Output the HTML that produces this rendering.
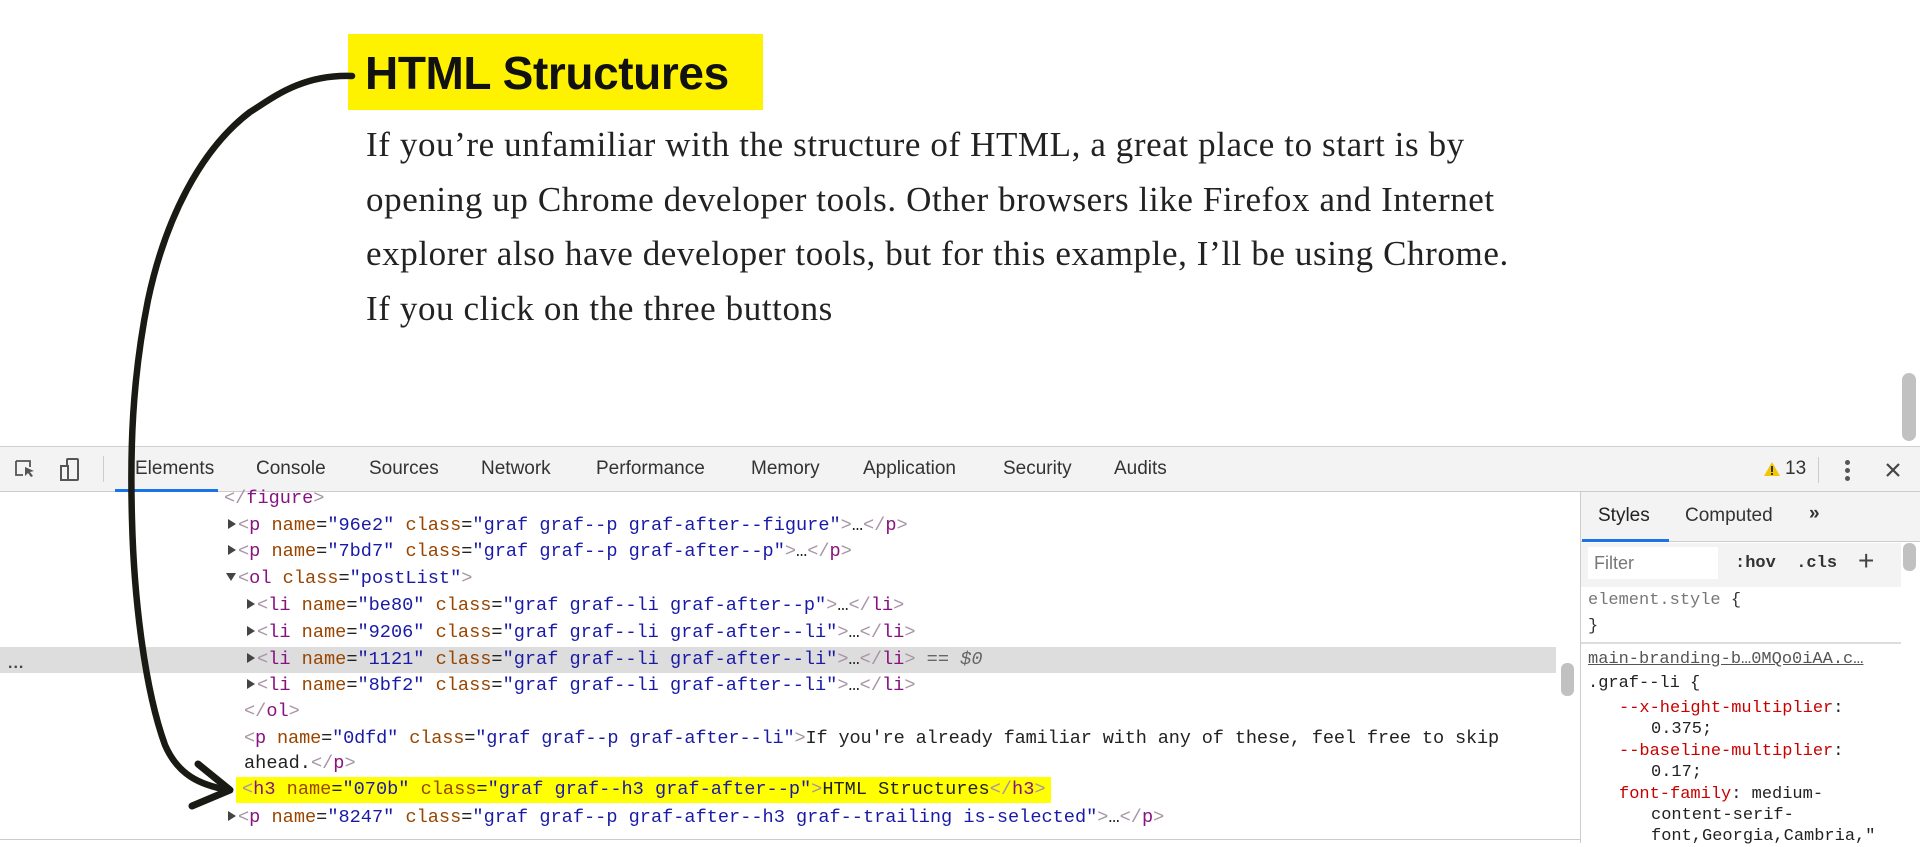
<!DOCTYPE html>
<html><head><meta charset="utf-8"><style>
*{margin:0;padding:0;box-sizing:border-box}
body{width:1920px;height:842px;overflow:hidden;background:#fff;position:relative;font-family:"Liberation Sans",sans-serif}
.abs{position:absolute}
.h{left:348px;top:34px;width:415px;height:76px;background:#fff200}
.h span{position:absolute;left:17px;top:12px;font-weight:bold;font-size:46px;color:#111;letter-spacing:-0.4px}
.p{left:366px;top:118px;font-family:"Liberation Serif",serif;font-size:35px;letter-spacing:0.6px;line-height:54.5px;color:#222;width:1300px;white-space:nowrap}
.pscroll{left:1902px;top:373px;width:14px;height:68px;background:#c1c1c1;border-radius:7px}
.dt{left:0;top:446px;width:1920px;height:396px;border-top:1px solid #cfcfcf}
.tb{left:0;top:0;width:1920px;height:45px;background:#f3f3f3;border-bottom:1px solid #ccc}
.tab{position:absolute;top:11px;font-size:19px;color:#333}
.code{font-family:"Liberation Mono",monospace;font-size:18.6px;color:#222;white-space:pre;position:absolute;line-height:26px}
.tg{color:#881280}.an{color:#994500}.av{color:#1a1aa6}.br{color:#a894a6}
.row{position:absolute;left:0;height:26px}
.tri{display:inline-block;width:0;height:0;border-left:8px solid #444;border-top:5px solid transparent;border-bottom:5px solid transparent;margin-right:2px;vertical-align:1px}
.trd{display:inline-block;width:0;height:0;border-top:8px solid #444;border-left:5px solid transparent;border-right:5px solid transparent;margin-right:2px;vertical-align:2px}
.sp{left:1580px;top:45px;width:340px;height:351px;border-left:1px solid #ccc;background:#fff}
.sm{font-family:"Liberation Mono",monospace;font-size:17px;position:absolute;white-space:pre;line-height:21px}
</style></head><body>
<div class="abs h"><span>HTML Structures</span></div>
<div class="abs p">If you’re unfamiliar with the structure of HTML, a great place to start is by<br>opening up Chrome developer tools. Other browsers like Firefox and Internet<br>explorer also have developer tools, but for this example, I’ll be using Chrome.<br>If you click on the three buttons</div>
<div class="abs pscroll"></div>

<div class="abs dt">
 <div class="abs tb">
  <svg class="abs" style="left:14px;top:12px" width="24" height="22" viewBox="0 0 24 22"><path d="M2 2h14v6M2 2v14h7" fill="none" stroke="#555" stroke-width="1.8"/><path d="M11 8l9 4-4 1 3 4-2 1-3-4-3 3z" fill="#555"/></svg>
  <svg class="abs" style="left:58px;top:10px" width="26" height="26" viewBox="0 0 26 26"><rect x="9" y="2" width="11" height="21" rx="1" fill="none" stroke="#555" stroke-width="2"/><rect x="3" y="9" width="7" height="14" fill="#f3f3f3" stroke="#555" stroke-width="2"/></svg>
  <div class="abs" style="left:103px;top:9px;width:1px;height:26px;background:#ccc"></div>
  <div class="tab" style="left:135px">Elements</div>
  <div class="abs" style="left:115px;top:42px;width:103px;height:3px;background:#1a73e8"></div>
  <div class="tab" style="left:256px">Console</div>
  <div class="tab" style="left:369px">Sources</div>
  <div class="tab" style="left:481px">Network</div>
  <div class="tab" style="left:596px">Performance</div>
  <div class="tab" style="left:751px">Memory</div>
  <div class="tab" style="left:863px">Application</div>
  <div class="tab" style="left:1003px">Security</div>
  <div class="tab" style="left:1114px">Audits</div>
  <svg class="abs" style="left:1763px;top:14px" width="18" height="16" viewBox="0 0 18 16"><path d="M9 1L17 15H1z" fill="#f2c600"/><rect x="8" y="5" width="2" height="6" fill="#333"/><rect x="8" y="12" width="2" height="2" fill="#333"/></svg>
  <div class="tab" style="left:1785px">13</div>
  <div class="abs" style="left:1818px;top:10px;width:1px;height:26px;background:#ccc"></div>
  <div class="abs" style="left:1845px;top:13px;width:5px;height:5px;border-radius:3px;background:#555;box-shadow:0 8px 0 #555,0 16px 0 #555"></div>
  <svg class="abs" style="left:1885px;top:15px" width="16" height="16" viewBox="0 0 16 16"><path d="M2 2L14 14M14 2L2 14" stroke="#444" stroke-width="2.2"/></svg>
 </div>
 <div class="row" style="top:200px;width:1556px;background:#ddd"></div>
 <div class="abs" style="left:8px;top:208px;font-size:16px;color:#444;font-weight:bold;letter-spacing:1px">...</div>
 <div class="abs" style="left:236px;top:330px;width:815px;height:26px;background:#ffff00"></div>
 <div class="code" style="left:224px;top:39px"><span class="br">&lt;/</span><span class="tg">figure</span><span class="br">&gt;</span></div>
 <div class="code" style="left:228px;top:66px"><span class="tri"></span><span class="br">&lt;</span><span class="tg">p</span> <span class="an">name</span>=<span class="av">"96e2"</span> <span class="an">class</span>=<span class="av">"graf graf--p graf-after--figure"</span><span class="br">&gt;</span>…<span class="br">&lt;/</span><span class="tg">p</span><span class="br">&gt;</span></div>
 <div class="code" style="left:228px;top:92px"><span class="tri"></span><span class="br">&lt;</span><span class="tg">p</span> <span class="an">name</span>=<span class="av">"7bd7"</span> <span class="an">class</span>=<span class="av">"graf graf--p graf-after--p"</span><span class="br">&gt;</span>…<span class="br">&lt;/</span><span class="tg">p</span><span class="br">&gt;</span></div>
 <div class="code" style="left:226px;top:119px"><span class="trd"></span><span class="br">&lt;</span><span class="tg">ol</span> <span class="an">class</span>=<span class="av">"postList"</span><span class="br">&gt;</span></div>
 <div class="code" style="left:247px;top:146px"><span class="tri"></span><span class="br">&lt;</span><span class="tg">li</span> <span class="an">name</span>=<span class="av">"be80"</span> <span class="an">class</span>=<span class="av">"graf graf--li graf-after--p"</span><span class="br">&gt;</span>…<span class="br">&lt;/</span><span class="tg">li</span><span class="br">&gt;</span></div>
 <div class="code" style="left:247px;top:173px"><span class="tri"></span><span class="br">&lt;</span><span class="tg">li</span> <span class="an">name</span>=<span class="av">"9206"</span> <span class="an">class</span>=<span class="av">"graf graf--li graf-after--li"</span><span class="br">&gt;</span>…<span class="br">&lt;/</span><span class="tg">li</span><span class="br">&gt;</span></div>
 <div class="code" style="left:247px;top:200px"><span class="tri"></span><span class="br">&lt;</span><span class="tg">li</span> <span class="an">name</span>=<span class="av">"1121"</span> <span class="an">class</span>=<span class="av">"graf graf--li graf-after--li"</span><span class="br">&gt;</span>…<span class="br">&lt;/</span><span class="tg">li</span><span class="br">&gt;</span> <span style="color:#666">== <i>$0</i></span></div>
 <div class="code" style="left:247px;top:226px"><span class="tri"></span><span class="br">&lt;</span><span class="tg">li</span> <span class="an">name</span>=<span class="av">"8bf2"</span> <span class="an">class</span>=<span class="av">"graf graf--li graf-after--li"</span><span class="br">&gt;</span>…<span class="br">&lt;/</span><span class="tg">li</span><span class="br">&gt;</span></div>
 <div class="code" style="left:244px;top:252px"><span class="br">&lt;/</span><span class="tg">ol</span><span class="br">&gt;</span></div>
 <div class="code" style="left:244px;top:279px;letter-spacing:-0.15px"><span class="br">&lt;</span><span class="tg">p</span> <span class="an">name</span>=<span class="av">"0dfd"</span> <span class="an">class</span>=<span class="av">"graf graf--p graf-after--li"</span><span class="br">&gt;</span>If you're already familiar with any of these, feel free to skip</div>
 <div class="code" style="left:244px;top:304px">ahead.<span class="br">&lt;/</span><span class="tg">p</span><span class="br">&gt;</span></div>
 <div class="code" style="left:242px;top:330px"><span class="br">&lt;</span><span class="tg">h3</span> <span class="an">name</span>=<span class="av">"070b"</span> <span class="an">class</span>=<span class="av">"graf graf--h3 graf-after--p"</span><span class="br">&gt;</span>HTML Structures<span class="br">&lt;/</span><span class="tg">h3</span><span class="br">&gt;</span></div>
 <div class="code" style="left:228px;top:358px"><span class="tri"></span><span class="br">&lt;</span><span class="tg">p</span> <span class="an">name</span>=<span class="av">"8247"</span> <span class="an">class</span>=<span class="av">"graf graf--p graf-after--h3 graf--trailing is-selected"</span><span class="br">&gt;</span>…<span class="br">&lt;/</span><span class="tg">p</span><span class="br">&gt;</span></div>
 <div class="abs" style="left:1561px;top:216px;width:13px;height:33px;background:#c1c1c1;border-radius:6px"></div>
 <div class="abs" style="left:0;top:392px;width:1580px;height:1px;background:#ccc"></div>
 <div class="abs sp">
  <div class="abs" style="left:0;top:0;width:340px;height:50px;background:#f3f3f3;border-bottom:1px solid #ccc"></div>
  <div class="tab" style="left:17px;top:13px;color:#222">Styles</div>
  <div class="abs" style="left:1px;top:47px;width:87px;height:3px;background:#1a73e8"></div>
  <div class="tab" style="left:104px;top:13px">Computed</div>
  <div class="tab" style="left:228px;top:11px;font-weight:bold">»</div>
  <div class="abs" style="left:0;top:51px;width:320px;height:44px;background:#f3f3f3"></div>
  <div class="abs" style="left:7px;top:55px;width:130px;height:32px;background:#fff"></div>
  <div class="abs" style="left:13px;top:61px;font-size:18px;color:#777">Filter</div>
  <div class="sm" style="left:154px;top:61px;font-weight:bold;color:#333">:hov  .cls</div>
  <div class="abs" style="left:277px;top:53px;font-size:28px;color:#444">+</div>
  <div class="sm" style="left:7px;top:98px;color:#777">element.style <span style="color:#333">{</span></div>
  <div class="sm" style="left:7px;top:124px;color:#333">}</div>
  <div class="abs" style="left:0;top:150px;width:320px;height:2px;background:#ddd"></div>
  <div class="sm" style="left:7px;top:157px;color:#555;text-decoration:underline">main-branding-b…0MQo0iAA.c…</div>
  <div class="sm" style="left:7px;top:181px;color:#222">.graf--li {</div>
  <div class="sm" style="left:38px;top:206px;color:#c80000">--x-height-multiplier<span style="color:#222">:</span></div>
  <div class="sm" style="left:70px;top:227px;color:#222">0.375;</div>
  <div class="sm" style="left:38px;top:249px;color:#c80000">--baseline-multiplier<span style="color:#222">:</span></div>
  <div class="sm" style="left:70px;top:270px;color:#222">0.17;</div>
  <div class="sm" style="left:38px;top:292px;color:#c80000">font-family<span style="color:#222">: medium-</span></div>
  <div class="sm" style="left:70px;top:313px;color:#222">content-serif-</div>
  <div class="sm" style="left:70px;top:334px;color:#222">font,Georgia,Cambria,"</div>
  <div class="abs" style="left:322px;top:51px;width:13px;height:28px;background:#c1c1c1;border-radius:6px"></div>
 </div>
</div>
<svg class="abs" style="left:0;top:0" width="1920" height="842" viewBox="0 0 1920 842"><path d="M352 76C300 74 270 100 250 112C200 150 165 220 148 300C132 380 130 450 132 520C134 600 145 690 165 745C178 775 200 785 228 790" fill="none" stroke="#1a1a14" stroke-width="6.5" stroke-linecap="round"/><path d="M198 764L230 790L192 806" fill="none" stroke="#1a1a14" stroke-width="7" stroke-linecap="round" stroke-linejoin="round"/></svg>
</body></html>
